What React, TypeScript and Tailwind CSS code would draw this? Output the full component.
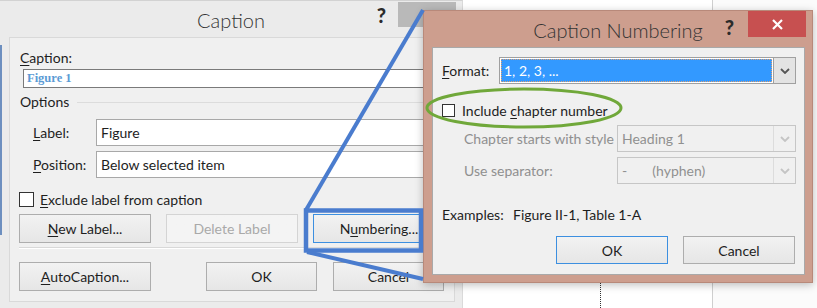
import { type ReactNode } from "react";

// ─── Small pieces ───
function Chevron({ disabled }: { disabled?: boolean }) {
  return (
    <svg width="10" height="6" viewBox="0 0 10 6" className="block">
      <path
        d="M1 1 L5 5 L9 1"
        fill="none"
        stroke={disabled ? "#c4c4c4" : "#555555"}
        strokeWidth="1.8"
      />
    </svg>
  );
}

function Btn({
  children,
  w,
  disabled,
  focus,
}: {
  children: ReactNode;
  w: string;
  disabled?: boolean;
  focus?: boolean;
}) {
  return (
    <div
      className={`${w} h-full shrink-0 flex items-center justify-center border bg-gradient-to-b from-[#f2f2f2] to-[#e6e6e6] ${
        disabled
          ? "border-[#d4d4d4] text-[#a9a9a9] from-[#f4f4f4] to-[#f4f4f4]"
          : focus
          ? "border-[#3c8fe0] text-[#1e1e1e]"
          : "border-[#adadad] text-[#1e1e1e]"
      }`}
    >
      {children}
    </div>
  );
}

function Combo({ value, disabled }: { value: ReactNode; disabled?: boolean }) {
  return (
    <div
      className={`w-[179px] h-[27px] flex border ${
        disabled ? "border-[#c6c6c6] bg-[#f0f0f0] text-[#909090]" : "border-[#a0a0a0] bg-white"
      }`}
    >
      <div className="flex-1 flex items-center pl-[4px] whitespace-pre">{value}</div>
      <div className="w-[22px] flex items-center justify-center border-l border-[#dcdcdc]">
        <Chevron disabled={disabled} />
      </div>
    </div>
  );
}

// ─── Caption dialog (behind) ───
function CaptionDialog() {
  return (
    <div className="w-[463px] h-[308px] shrink-0 bg-[#ebebeb] border-t border-[#d2d2d2] border-r border-r-[#dadada] flex flex-col">
      {/* Title bar */}
      <div className="h-[36px] shrink-0 grid grid-cols-[1fr_auto_1fr]">
        <div />
        <div className="text-[20px] font-light text-[#333333] leading-none self-center pt-[2px]">Caption</div>
        <div className="flex justify-end items-start">
          <span className="mt-[4px] mr-[12px] text-[20px] font-black text-[#2b2b2b] leading-none">?</span>
          <div className="mt-[1px] mr-[6px] w-[58px] h-[25px] bg-[#b9b9b9]" />
        </div>
      </div>

      {/* Content */}
      <div className="ml-[9px] mr-[7px] h-[265px] bg-[#f0f0f0] border border-[#d9d9d9] flex flex-col">
        <div className="mt-[12px] pl-[10px] leading-[16px]">
          <u className="underline-offset-2">C</u>aption:
        </div>
        <div className="mt-[3px] ml-[13px] w-[422px] h-[19px] bg-white border border-[#7a7a7a] flex items-center pl-[3px]">
          <span className="font-['Liberation_Serif',serif] font-bold text-[12.5px] text-[#5b9bd5]">Figure 1</span>
        </div>

        <div className="mt-[6px] pl-[10px] flex items-center leading-[16px]">
          <span>Options</span>
          <div className="ml-[8px] flex-1 h-px bg-[#dcdcdc]" />
        </div>

        <div className="mt-[9px] h-[27px] flex items-center">
          <div className="w-[86px] pl-[23px]">
            <u className="underline-offset-2">L</u>abel:
          </div>
          <div className="w-[350px] h-full bg-white border border-[#a8a8a8] flex items-center pl-[4px]">Figure</div>
        </div>
        <div className="mt-[5px] h-[27px] flex items-center">
          <div className="w-[86px] pl-[23px]">
            <u className="underline-offset-2">P</u>osition:
          </div>
          <div className="w-[350px] h-full bg-white border border-[#a8a8a8] flex items-center pl-[4px]">
            Below selected item
          </div>
        </div>

        <div className="mt-[14px] h-[15px] pl-[9px] flex items-center">
          <div className="w-[15px] h-[15px] bg-white border border-[#333333]" />
          <span className="ml-[6px]">
            <u className="underline-offset-2">E</u>xclude label from caption
          </span>
        </div>

        <div className="mt-[7px] h-[29px] pl-[9px] flex gap-[15px]">
          <Btn w="w-[132px]">
            <span>
              <u className="underline-offset-2">N</u>ew Label...
            </span>
          </Btn>
          <Btn w="w-[132px]" disabled>
            Delete Label
          </Btn>
          <Btn w="w-[132px]" focus>
            <span>
              N<u className="underline-offset-2">u</u>mbering...
            </span>
          </Btn>
        </div>

        <div className="mt-[4px] ml-[9px] w-[426px] h-px bg-[#d8d8d8]" />
        <div className="ml-[9px] w-[426px] h-px bg-white" />

        <div className="mt-[13px] h-[29px] pl-[9px] flex">
          <Btn w="w-[132px]">
            <span>
              <u className="underline-offset-2">A</u>utoCaption...
            </span>
          </Btn>
          <div className="ml-[55px]">
            <Btn w="w-[111px]">OK</Btn>
          </div>
          <div className="ml-[16px] h-full">
            <Btn w="w-[111px]">Cancel</Btn>
          </div>
        </div>
      </div>
    </div>
  );
}

// ─── Caption Numbering dialog (front) ───
function NumberingDialog() {
  return (
    <div className="absolute left-[423px] top-[10px] w-[390px] h-[273px] bg-[#cd9e8e] border border-[#b8897a] shadow-[0_2px_8px_rgba(0,0,0,0.25)] flex flex-col">
      {/* Title bar */}
      <div className="h-[36px] shrink-0 grid grid-cols-[1fr_auto_1fr]">
        <div />
        <div className="self-center pt-[2px] text-[20px] font-light leading-none text-[#333333]">Caption Numbering</div>
        <div className="flex justify-end items-start">
          <span className="mt-[6px] mr-[14px] text-[20px] font-black leading-none text-[#2b2b2b]">?</span>
          <div className="mr-[6px] w-[58px] h-[26px] bg-[#c75050] flex items-center justify-center">
            <svg width="11" height="11" viewBox="0 0 11 11">
              <path d="M1 1 L10 10 M10 1 L1 10" stroke="white" strokeWidth="2.2" />
            </svg>
          </div>
        </div>
      </div>

      {/* Content */}
      <div className="ml-[8px] mr-[7px] h-[228px] bg-[#f0f0f0] border border-[#a9a9a9] flex flex-col">
        <div className="mt-[9px] pl-[9px] flex items-center h-[27px]">
          <div className="w-[57px]">
            <u className="underline-offset-2">F</u>ormat:
          </div>
          <div className="w-[297px] h-full flex border border-[#a0a0a0] bg-white">
            <div className="flex-1 m-[1px] bg-[#3399ff] border border-dotted border-[#e0a070] flex items-center pl-[2px] text-white">
              1, 2, 3, ...
            </div>
            <div className="w-[22px] flex items-center justify-center bg-[#e3e3e3] border-l border-[#a0a0a0]">
              <Chevron />
            </div>
          </div>
        </div>

        <div className="mt-[20px] pl-[9px] h-[13px] flex items-center">
          <div className="w-[13px] h-[13px] bg-white border border-[#333333]" />
          <span className="ml-[7px]">
            Include <u className="underline-offset-2">c</u>hapter number
          </span>
        </div>

        <div className="mt-[8px] pl-[31px] h-[27px] flex items-center text-[#8f8f8f]">
          <div className="w-[153px]">Chapter starts with style</div>
          <Combo value="Heading 1" disabled />
        </div>
        <div className="mt-[5px] pl-[31px] h-[27px] flex items-center text-[#8f8f8f]">
          <div className="w-[153px]">Use separator:</div>
          <Combo value={"-       (hyphen)"} disabled />
        </div>

        <div className="mt-[22px] pl-[9px] h-[16px] flex items-center">
          <div className="w-[71px]">Examples:</div>
          <div>Figure II-1, Table 1-A</div>
        </div>

        <div className="mt-[14px] h-[28px] pr-[9px] flex justify-end gap-[15px]">
          <Btn w="w-[112px]" focus>
            OK
          </Btn>
          <Btn w="w-[112px]">Cancel</Btn>
        </div>
      </div>
    </div>
  );
}

// ─── Page ───
export default function App() {
  return (
    <div className="relative w-[817px] h-[308px] overflow-hidden bg-white flex font-['Lato','Noto_Sans',sans-serif] text-[14px] text-[#1e1e1e]">
      {/* desktop sliver on the far left */}
      <div className="absolute left-0 top-[45px] w-[2px] h-[190px] bg-[#6d8fbf]" />

      <CaptionDialog />

      {/* Word document behind */}
      <div className="w-[249px] shrink-0 flex flex-col">
        <div className="h-[238px]" />
        <div className="ml-[137px] flex-1 border-l border-dotted border-[#333333]" />
      </div>
      <div className="w-px bg-[#cfcfcf]" />
      <div className="flex-1 bg-[#fbfbfb]" />

      <NumberingDialog />

      {/* callout drawing */}
      <svg className="absolute inset-0 pointer-events-none" width="817" height="308" viewBox="0 0 817 308">
        <g stroke="#4a7cce" strokeWidth="4.5" fill="none" strokeLinejoin="miter">
          <rect x="306" y="210.5" width="115" height="40" />
          <path d="M306 210 L423 10" strokeWidth="4" />
          <path d="M307 252 L423 279" strokeWidth="4" />
        </g>
        <ellipse cx="524" cy="108" rx="97" ry="19" fill="none" stroke="#70a83a" strokeWidth="3" />
      </svg>
    </div>
  );
}
